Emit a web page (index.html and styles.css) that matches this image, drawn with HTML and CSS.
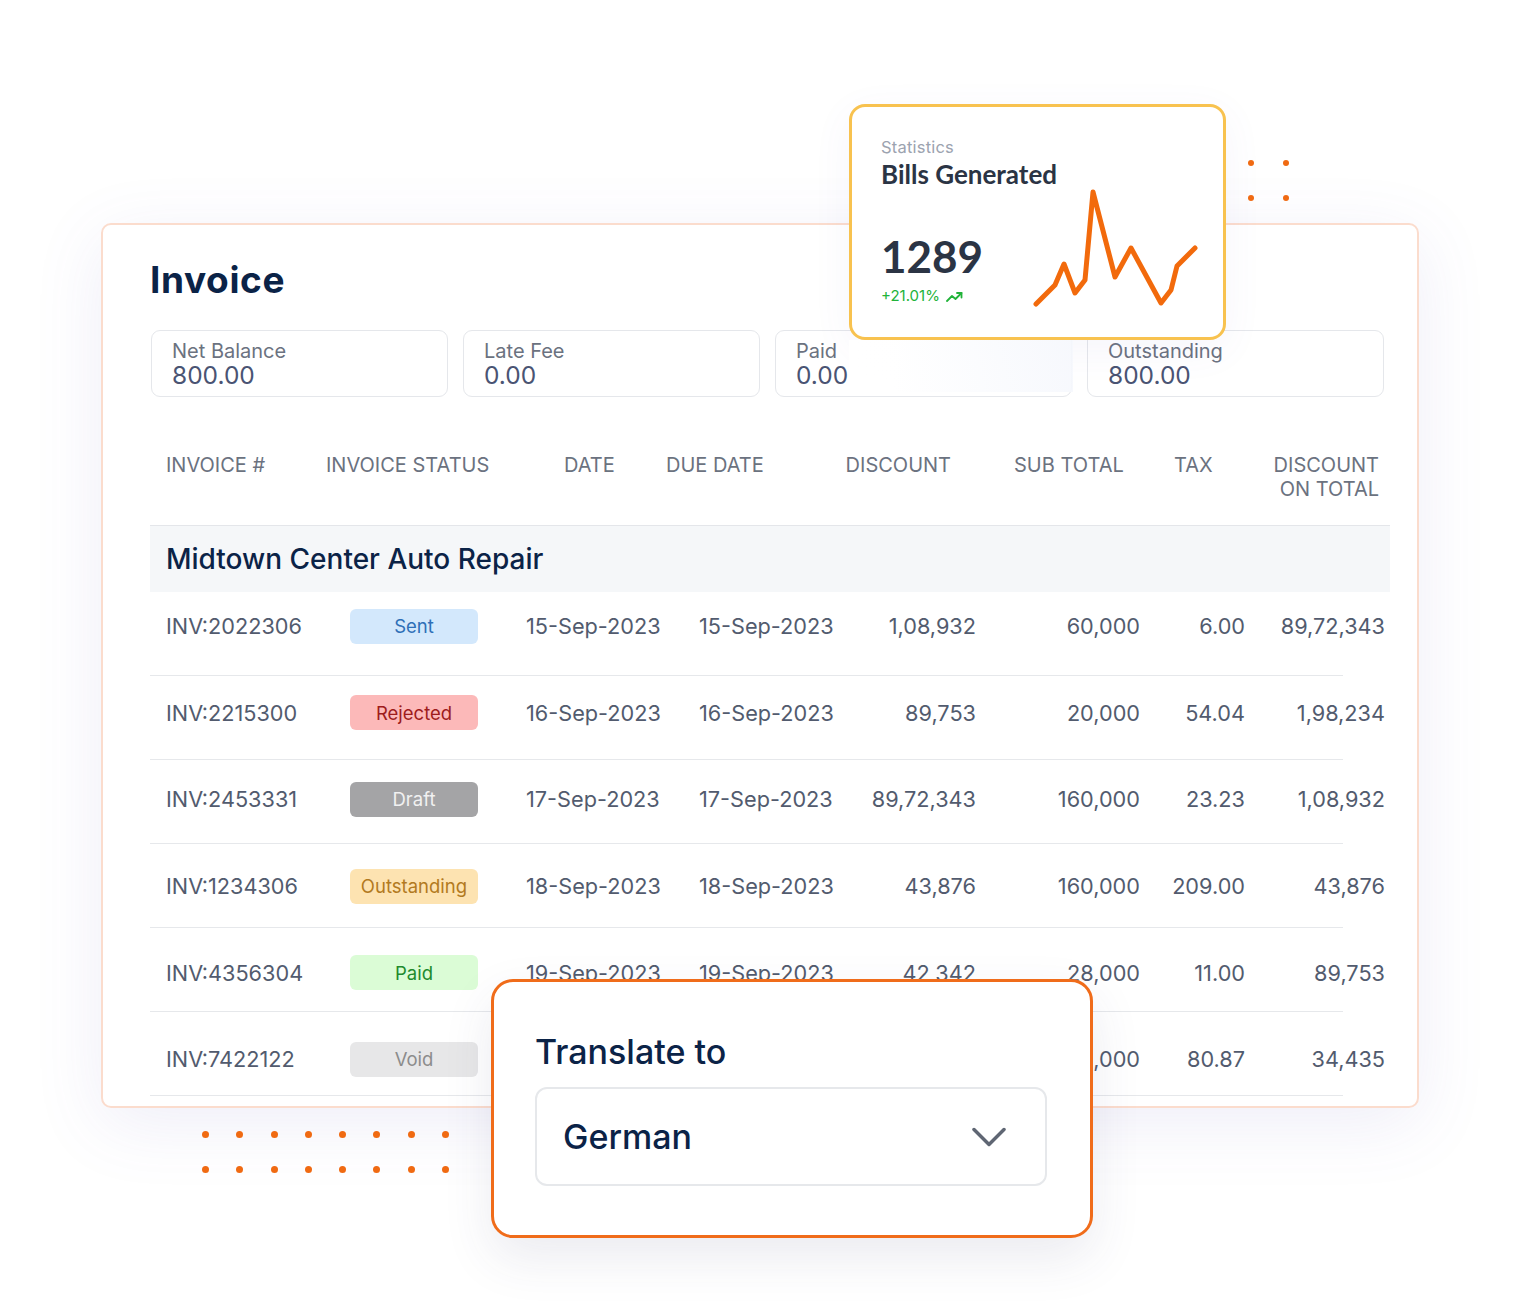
FILE: index.html
```html
<!DOCTYPE html>
<html lang="en">
<head>
<meta charset="utf-8">
<title>Invoice</title>
<link rel="stylesheet" href="styles.css">
</head>
<body>
<div class="stage">
  <section class="invoice-card">
    <h1 class="title">Invoice</h1>
    <div class="summary">
      <div class="sum-card"><div class="sum-label">Net Balance</div><div class="sum-value">800.00</div></div>
      <div class="sum-card"><div class="sum-label">Late Fee</div><div class="sum-value">0.00</div></div>
      <div class="sum-card"><div class="sum-label">Paid</div><div class="sum-value">0.00</div></div>
      <div class="sum-card"><div class="sum-label">Outstanding</div><div class="sum-value">800.00</div></div>
    </div>
    <div class="table">
      <div class="thead">
        <div class="th c1">INVOICE #</div>
        <div class="th">INVOICE STATUS</div>
        <div class="th">DATE</div>
        <div class="th">DUE DATE</div>
        <div class="th r">DISCOUNT</div>
        <div class="th c6">SUB TOTAL</div>
        <div class="th">TAX</div>
        <div class="th r">DISCOUNT<br>ON TOTAL</div>
      </div>
      <div class="group">Midtown Center Auto Repair</div>
      <div class="tbody">
        <div class="row">
          <div class="c1">INV:2022306</div><div><span class="badge sent">Sent</span></div>
          <div>15-Sep-2023</div><div>15-Sep-2023</div>
          <div class="num">1,08,932</div><div class="num">60,000</div><div class="num">6.00</div><div class="num">89,72,343</div>
        </div>
        <div class="row">
          <div class="c1">INV:2215300</div><div><span class="badge rejected">Rejected</span></div>
          <div>16-Sep-2023</div><div>16-Sep-2023</div>
          <div class="num">89,753</div><div class="num">20,000</div><div class="num">54.04</div><div class="num">1,98,234</div>
        </div>
        <div class="row">
          <div class="c1">INV:2453331</div><div><span class="badge draft">Draft</span></div>
          <div>17-Sep-2023</div><div>17-Sep-2023</div>
          <div class="num">89,72,343</div><div class="num">160,000</div><div class="num">23.23</div><div class="num">1,08,932</div>
        </div>
        <div class="row">
          <div class="c1">INV:1234306</div><div><span class="badge outstanding">Outstanding</span></div>
          <div>18-Sep-2023</div><div>18-Sep-2023</div>
          <div class="num">43,876</div><div class="num">160,000</div><div class="num">209.00</div><div class="num">43,876</div>
        </div>
        <div class="row">
          <div class="c1">INV:4356304</div><div><span class="badge paid">Paid</span></div>
          <div>19-Sep-2023</div><div>19-Sep-2023</div>
          <div class="num">42,342</div><div class="num">28,000</div><div class="num">11.00</div><div class="num">89,753</div>
        </div>
        <div class="row">
          <div class="c1">INV:7422122</div><div><span class="badge void">Void</span></div>
          <div>20-Sep-2023</div><div>20-Sep-2023</div>
          <div class="num">1,08,932</div><div class="num">28,000</div><div class="num">80.87</div><div class="num">34,435</div>
        </div>
      </div>
    </div>
  </section>

  <aside class="stat-card">
    <div class="stat-text">
      <div class="stat-kicker">Statistics</div>
      <div class="stat-title">Bills Generated</div>
      <div class="stat-number">1289</div>
      <div class="stat-trend">+21.01%
        <svg class="trend-icon" width="17" height="11" viewBox="0 0 17 11"><polyline points="1,10 6,5 9.5,8 15.5,2" fill="none" stroke="#22b33a" stroke-width="1.8" stroke-linecap="round" stroke-linejoin="round"/><polyline points="11,2 15.5,2 15.5,6.5" fill="none" stroke="#22b33a" stroke-width="1.8" stroke-linecap="round" stroke-linejoin="round"/></svg>
      </div>
    </div>
    <svg class="spark" width="175" height="125" viewBox="0 0 175 125">
      <polyline points="8,116 27,97 36,76 47,105 57,92 65,4 87,89 103,60 133,115 143,102 149,78 167,60" fill="none" stroke="#f26a0c" stroke-width="5" stroke-linecap="round" stroke-linejoin="round"/>
    </svg>
  </aside>

  <div class="dots dots-tr">
    <span class="dot"></span><span class="dot"></span><span class="dot"></span><span class="dot"></span>
  </div>
  <div class="dots dots-bl">
    <span class="dot"></span><span class="dot"></span><span class="dot"></span><span class="dot"></span><span class="dot"></span><span class="dot"></span><span class="dot"></span><span class="dot"></span>
    <span class="dot"></span><span class="dot"></span><span class="dot"></span><span class="dot"></span><span class="dot"></span><span class="dot"></span><span class="dot"></span><span class="dot"></span>
  </div>

  <div class="translate-card">
    <div class="translate-title">Translate to</div>
    <div class="select">
      <span class="select-value">German</span>
      <svg class="chevron" width="34" height="20" viewBox="0 0 34 20"><polyline points="2,2.5 17,17.5 32,2.5" fill="none" stroke="#5f6673" stroke-width="3.5" stroke-linecap="round" stroke-linejoin="round"/></svg>
    </div>
  </div>
</div>
</body>
</html>
```

FILE: styles.css
```css
body {
  margin: 0;
  background: #ffffff;
  font-family: Inter, "Noto Sans", sans-serif;
}

.stage {
  position: relative;
  width: 1518px;
  height: 1308px;
  box-sizing: border-box;
  padding: 223px 0 0 101px;
  overflow: hidden;
}

/* main invoice card */
.invoice-card {
  box-sizing: border-box;
  width: 1318px;
  height: 885px;
  border: 2px solid #fbdccd;
  border-radius: 10px;
  background: #ffffff;
  padding: 33px 27px 0 47px;
  box-shadow: 0 16px 70px rgba(96, 84, 190, 0.1);
}

.title {
  margin: 0;
  font-size: 37px;
  line-height: 44px;
  letter-spacing: 0.6px;
  font-weight: 700;
  color: #0b2347;
}

.summary {
  display: grid;
  grid-template-columns: repeat(4, 297px);
  gap: 15px;
  margin: 28px 0 0 1px;
}

.sum-card {
  box-sizing: border-box;
  height: 67px;
  border: 1px solid #e5e7eb;
  border-radius: 9px;
  padding: 9px 20px 8px;
}

.sum-label {
  font-size: 20px;
  line-height: 22px;
  color: #6b7280;
}

.sum-value {
  font-size: 24.5px;
  line-height: 26px;
  color: #4a5473;
}

/* table */
.thead {
  display: grid;
  grid-template-columns: 176px 238px 102px 134px 151px 223px 66px 139px;
  padding: 56px 11px 24px 0;
  border-bottom: 1px solid #e4e6ea;
}

.th {
  font-size: 20px;
  line-height: 24px;
  color: #6b7280;
}

.th.c1 { padding-left: 16px; }
.th.c6 { padding-left: 63px; }
.th.r { text-align: right; }

.group {
  height: 66px;
  display: flex;
  align-items: center;
  padding-left: 16px;
  background: #f5f7f9;
  font-size: 28px;
  font-weight: 500;
  color: #0b2347;
}

.tbody {
  background: linear-gradient(to bottom, transparent 83px, #e6e8eb 83px) repeat-y left top / 1193px 84px;
}

.row {
  display: grid;
  grid-template-columns: 200px 176px 173px 151px 126px 164px 105px 140px;
  height: 86.7px;
  box-sizing: border-box;
  padding-bottom: 18.7px;
  align-items: center;
  font-size: 21.7px;
  color: #525b6e;
}

.row .c1 { padding-left: 16px; }
.row .num { text-align: right; }

.badge {
  width: 128px;
  height: 35px;
  border-radius: 6px;
  display: flex;
  align-items: center;
  justify-content: center;
  font-size: 18.5px;
}

.badge.sent { background: #d3e8fc; color: #2e6fb7; }
.badge.rejected { background: #fcb9b9; color: #9e1c1c; }
.badge.draft { background: #a4a4a6; color: #f1f1f1; }
.badge.outstanding { background: #fde3b1; color: #b27a1f; }
.badge.paid { background: #dbfcd6; color: #218a2d; }
.badge.void { background: #e7e7e8; color: #8c8c8c; }

/* statistics overlay card */
.stat-card {
  position: absolute;
  left: 849px;
  top: 104px;
  box-sizing: border-box;
  width: 377px;
  height: 236px;
  border: 3px solid #f8c24f;
  border-radius: 16px;
  background: #ffffff;
  padding: 30px 0 0 29px;
  display: flex;
  align-items: flex-start;
  box-shadow: 0 10px 40px rgba(96, 84, 190, 0.06);
}

.stat-card::after {
  content: "";
  position: absolute;
  left: -3px;
  top: calc(100% + 3px);
  width: 224px;
  height: 52px;
  background: linear-gradient(90deg, #ffffff 0, rgba(255, 255, 255, 0.96) 20%, rgba(246, 248, 253, 0.9) 100%);
}

.stat-text {
  flex: none;
  width: 147px;
  white-space: nowrap;
}

.stat-kicker {
  font-size: 16.5px;
  line-height: 20px;
  letter-spacing: 0.2px;
  color: #9ca3af;
}

.stat-title {
  margin-top: 2px;
  font-family: Lato, Inter, sans-serif;
  font-size: 26px;
  line-height: 30px;
  font-weight: 700;
  color: #2b3444;
}

.stat-number {
  margin-top: 42px;
  font-family: Lato, Inter, sans-serif;
  font-size: 44px;
  line-height: 50px;
  font-weight: 700;
  color: #2b3444;
}

.stat-trend {
  margin-top: 6px;
  font-size: 15px;
  line-height: 18px;
  color: #22b33a;
  display: flex;
  align-items: center;
  gap: 6px;
}

.spark {
  flex: none;
  margin-top: 51px;
}

/* decorative dots */
.dots {
  position: absolute;
  display: grid;
}

.dot {
  display: block;
  border-radius: 50%;
  background: #f06a12;
}

.dots-tr {
  left: 1248px;
  top: 160px;
  grid-template-columns: repeat(2, 6px);
  gap: 29px;
}

.dots-tr .dot { width: 6px; height: 6px; }

.dots-bl {
  left: 202px;
  top: 1131px;
  grid-template-columns: repeat(8, 7px);
  column-gap: 27.3px;
  row-gap: 28px;
}

.dots-bl .dot { width: 7px; height: 7px; }

/* translate overlay card */
.translate-card {
  position: absolute;
  left: 491px;
  top: 979px;
  box-sizing: border-box;
  width: 602px;
  height: 259px;
  border: 3px solid #f06c1a;
  border-radius: 22px;
  background: #ffffff;
  padding: 50px 43px 0 41px;
  box-shadow: 0 20px 50px rgba(60, 60, 110, 0.1);
}

.translate-title {
  font-size: 34px;
  line-height: 40px;
  font-weight: 500;
  color: #0b2347;
}

.select {
  margin-top: 15px;
  box-sizing: border-box;
  height: 99px;
  border: 2px solid #e6e8eb;
  border-radius: 12px;
  padding: 0 39px 0 26px;
  display: flex;
  align-items: center;
  justify-content: space-between;
}

.select-value {
  font-size: 34px;
  font-weight: 500;
  color: #0b2347;
}
```
